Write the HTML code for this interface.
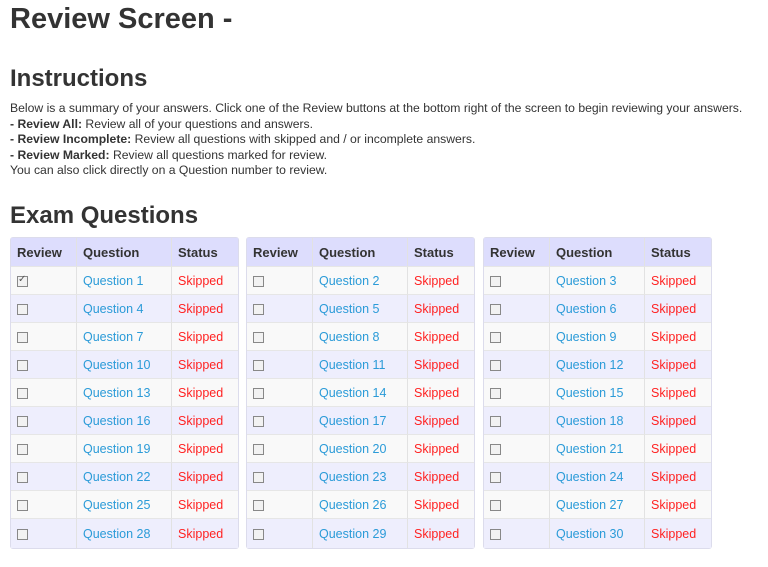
<!DOCTYPE html>
<html><head><style>
body{margin:0;background:#fff;font-family:"Liberation Sans",Arial,sans-serif;color:#333;width:768px;height:567px;overflow:hidden;position:relative}
h1{position:absolute;left:10px;top:3px;margin:0;font-size:29px;font-weight:bold;color:#333}
h2{position:absolute;left:10px;margin:0;font-size:24px;font-weight:bold;color:#333}
.txt{position:absolute;left:10px;top:101px;font-size:12.2px;line-height:15.6px;color:#333}
table{position:absolute;top:237px;width:229px;border-collapse:separate;border-spacing:0;border:1px solid #dcdcec;border-radius:3px;font-size:12.5px}
td,th{height:27px;padding:0 0 0 6px;border-right:1px solid #e2e2e2;border-top:1px solid #e6e6e6;text-align:left}
td{height:27px}
th{background:#ddddfd;font-weight:bold;color:#333;border-top:none;height:28px;font-size:13px}
td:last-child,th:last-child{border-right:none}
tr:nth-child(even) td{background:#f9f9f9}
tr:nth-child(odd) td{background:#eeeefd}
tr:last-child td{height:29px}
a{color:#2b9bd8;text-decoration:none}
.s{color:#f22}
.cb{display:inline-block;width:9px;height:9px;border:1px solid #888;background:#f2f2f2;vertical-align:middle;position:relative}
.ck:after{content:"✓";position:absolute;left:0;top:-3px;font-size:10px;color:#555}
.c1{width:59px}.c2{width:88px}
</style></head><body>
<h1>Review Screen -</h1>
<h2 style="top:65px">Instructions</h2>
<div class="txt">Below is a summary of your answers. Click one of the Review buttons at the bottom right of the screen to begin reviewing your answers.<br>
<b>- Review All:</b> Review all of your questions and answers.<br>
<b>- Review Incomplete:</b> Review all questions with skipped and / or incomplete answers.<br>
<b>- Review Marked:</b> Review all questions marked for review.<br>
You can also click directly on a Question number to review.</div>
<h2 style="top:202px">Exam Questions</h2>
<div id="t"></div>
<script>
var xs=[10,246,483],h='';
for(var c=0;c<3;c++){
h+='<table style="left:'+xs[c]+'px"><tr><th class="c1">Review</th><th class="c2">Question</th><th>Status</th></tr>';
for(var r=0;r<10;r++){var n=r*3+c+1;
h+='<tr><td><span class="cb'+(n==1?' ck':'')+'"></span></td><td><a>Question '+n+'</a></td><td class="s">Skipped</td></tr>';}
h+='</table>';}
document.getElementById('t').innerHTML=h;
</script>
</body></html>
